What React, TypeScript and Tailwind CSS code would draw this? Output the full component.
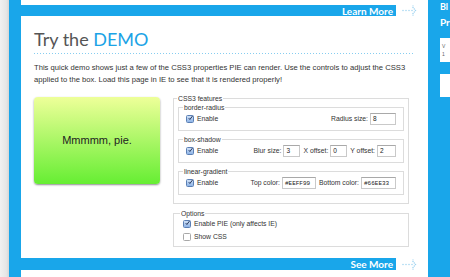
import React from 'react';

const BLUE = 'bg-[#19a6ea]';

function DotArrow() {
  return (
    <svg width="16" height="11" viewBox="0 0 16 11" fill="#9fd3f0">
      <circle cx="1" cy="5.5" r="0.75" />
      <circle cx="4" cy="5.5" r="0.75" />
      <circle cx="7" cy="5.5" r="0.75" />
      <circle cx="10" cy="5.5" r="0.75" />
      <circle cx="13.5" cy="5.5" r="0.75" />
      <circle cx="11" cy="2.5" r="0.75" />
      <circle cx="12.3" cy="4" r="0.75" />
      <circle cx="12.3" cy="7" r="0.75" />
      <circle cx="11" cy="8.5" r="0.75" />
      <circle cx="11" cy="0.8" r="0.6" />
      <circle cx="11" cy="10.2" r="0.6" />
    </svg>
  );
}

function LinkBar({ label }: { label: string }) {
  return (
    <div className="flex items-stretch h-full">
      <div className={`flex-1 ${BLUE} flex items-center justify-end pr-[3px]`}>
        <span className="text-white font-bold text-[10px] leading-none font-['Lato',sans-serif]">{label}</span>
      </div>
      <div className="w-[32px] flex items-center pl-[6px]">
        <DotArrow />
      </div>
    </div>
  );
}

function Check({ checked }: { checked: boolean }) {
  return (
    <span
      className={`inline-flex w-[8px] h-[8px] rounded-[1.5px] border items-center justify-center shrink-0 ${
        checked
          ? 'border-[#5a7fb5] bg-[linear-gradient(#cfe0f6,#8db3e6)]'
          : 'border-[#a8a8a8] bg-white'
      }`}
    >
      {checked && (
        <svg width="8" height="8" viewBox="0 0 8 8" className="-mt-[2px] ml-[1px]">
          <path d="M1.2 4.2 L3 6.4 L7.4 0.6" stroke="#1d2f55" strokeWidth="1.5" fill="none" />
        </svg>
      )}
    </span>
  );
}

function Field({ value, w, mono }: { value: string; w: string; mono?: boolean }) {
  return (
    <span
      className={`${w} h-[12px] border border-[#c9c9c9] border-t-[#a9a9a9] bg-white flex items-center pl-[2px] text-[#222] ${
        mono ? "font-['Liberation_Mono',monospace] text-[6px]" : 'text-[6.5px]'
      }`}
    >
      {value}
    </span>
  );
}

function Feature({ legend, children }: { legend: string; children: React.ReactNode }) {
  return (
    <fieldset className="border border-[#dcdcdc] pl-[7px] pr-[7px] pb-[5px]">
      <legend className="px-[1px] -ml-[3px] text-[6.8px] leading-[9px] text-[#333]">{legend}</legend>
      <div className="flex items-center h-[12px] mt-[1px]">
        <Check checked />
        <span className="ml-[3px] text-[6.8px] text-[#333]">Enable</span>
        <div className="flex-1" />
        {children}
      </div>
    </fieldset>
  );
}

function Label({ text, className = '' }: { text: string; className?: string }) {
  return <span className={`text-[6.8px] text-[#333] mr-[2px] ${className}`}>{text}</span>;
}

export default function App() {
  return (
    <div className="flex w-[450px] h-[277px] overflow-hidden bg-white font-['Liberation_Sans',Arial,sans-serif]">
      <div className="w-[9px] bg-[linear-gradient(90deg,#f1f1f1,#e6e6e6_70%,#d6d6d6)]" />
      <div className={`w-[12px] ${BLUE}`} />

      <div className="flex-1 flex flex-col">
        <div className="h-[5px]" />
        <div className="h-[11px]">
          <LinkBar label="Learn More" />
        </div>

        <div className="h-[242px] pl-[13px] pr-[13px] pt-[12px]">
          <h1 className="text-[18px] leading-[22px] font-['Lato',sans-serif] text-[#555]">
            Try the <span className="text-[#1ba3e6]">DEMO</span>
          </h1>
          <div className="mt-[3px] h-px bg-[repeating-linear-gradient(90deg,#86cdf0_0_1px,transparent_1px_3px)]" />

          <p className="mt-[8px] text-[7.65px] leading-[12px] text-[#333] whitespace-nowrap">
            This quick demo shows just a few of the CSS3 properties PIE can render. Use the controls to adjust the CSS3
            <br />
            applied to the box. Load this page in IE to see that it is rendered properly!
          </p>

          <div className="mt-[8px] flex">
            <div className="mt-[3px] w-[126px] h-[87px] rounded-[4px] bg-[linear-gradient(#eeff99,#66ee33)] shadow-[0_1px_2px_rgba(0,0,0,0.45)] flex items-center justify-center">
              <span className="text-[11px] text-[#222]">Mmmmm, pie.</span>
            </div>

            <div className="ml-[13px] w-[236px] flex flex-col">
              <fieldset className="border border-[#dcdcdc] px-[4px] pb-[8px]">
                <legend className="px-[1px] -ml-[1px] text-[6.8px] leading-[9px] text-[#333]">CSS3 features</legend>
                <div className="flex flex-col gap-[4px]">
                  <Feature legend="border-radius">
                    <Label text="Radius size:" />
                    <Field value="8" w="w-[26px]" />
                  </Feature>
                  <Feature legend="box-shadow">
                    <Label text="Blur size:" />
                    <Field value="3" w="w-[17px]" />
                    <Label text="X offset:" className="ml-[3px]" />
                    <Field value="0" w="w-[17px]" />
                    <Label text="Y offset:" className="ml-[3px]" />
                    <Field value="2" w="w-[19px]" />
                  </Feature>
                  <Feature legend="linear-gradient">
                    <Label text="Top color:" />
                    <Field value="#EEFF99" w="w-[34px]" mono />
                    <Label text="Bottom color:" className="ml-[3px]" />
                    <Field value="#66EE33" w="w-[35px]" mono />
                  </Feature>
                </div>
              </fieldset>

              <fieldset className="mt-[5px] border border-[#dcdcdc] pl-[9px] pb-[4px]">
                <legend className="px-[1px] -ml-[3px] text-[6.8px] leading-[9px] text-[#333]">Options</legend>
                <div className="flex flex-col gap-[3px] mt-[1px]">
                  <label className="flex items-center h-[10px]">
                    <Check checked />
                    <span className="ml-[3px] text-[6.8px] text-[#333]">Enable PIE (only affects IE)</span>
                  </label>
                  <label className="flex items-center h-[10px]">
                    <Check checked={false} />
                    <span className="ml-[3px] text-[6.8px] text-[#333]">Show CSS</span>
                  </label>
                </div>
              </fieldset>
            </div>
          </div>
        </div>

        <div className="h-[12px]">
          <LinkBar label="See More" />
        </div>
        <div className="flex-1" />
      </div>

      <div className={`w-[22px] ${BLUE} pl-[12px] pt-[1px] flex flex-col overflow-hidden`}>
        <span className="text-white text-[9px] font-bold leading-[11px] font-['Lato',sans-serif] whitespace-nowrap">Bl</span>
        <span className="mt-[5px] text-white text-[10px] font-bold leading-[11px] font-['Lato',sans-serif]">Pr</span>
        <div className="mt-[10px] h-[24px] bg-white pl-[2px] pt-[4px] flex flex-col text-[5px] leading-[8px] text-[#666]">
          <span>V</span>
          <span>1</span>
        </div>
        <div className="mt-[12px] h-[23px] bg-white" />
      </div>
    </div>
  );
}
